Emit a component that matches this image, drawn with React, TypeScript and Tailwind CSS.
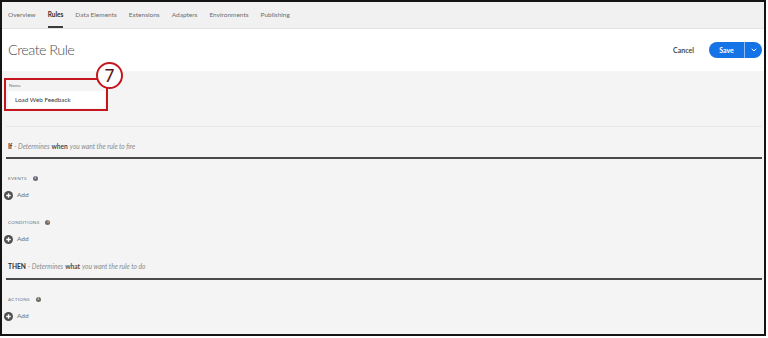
import { ChevronDown } from "lucide-react";

const TABS = ["Overview", "Rules", "Data Elements", "Extensions", "Adapters", "Environments", "Publishing"];

function InfoDot() {
  return (
    <span className="ml-[6px] flex h-[5px] w-[5px] items-center justify-center rounded-full bg-[#6b6b6b] text-[4px] font-bold leading-none text-white">
      i
    </span>
  );
}

function SectionLabel({ label, mt }: { label: string; mt: string }) {
  return (
    <div className={`flex h-[12px] items-center pl-[6px] ${mt}`}>
      <span className="text-[4.6px] uppercase tracking-[0.06em] text-[#6e6e6e]">{label}</span>
      <InfoDot />
    </div>
  );
}

function AddRow() {
  return (
    <div className="mt-[4px] flex h-[14px] items-center pl-[2px]">
      <svg width="9" height="9" viewBox="0 0 18 18">
        <circle cx="9" cy="9" r="9" fill="#505050" />
        <path d="M9 4.5v9M4.5 9h9" stroke="#fff" strokeWidth="2.6" />
      </svg>
      <span className="ml-[4px] text-[6.5px] text-[#6b6b6b]">Add</span>
    </div>
  );
}

function Heading({ lead, verb, rest, mt }: { lead: string; verb: string; rest: string; mt: string }) {
  return (
    <div className={`flex h-[14px] items-center pl-[6px] text-[6.6px] ${mt}`}>
      <span className="font-bold text-[#2c2c2c]">{lead}</span>
      <span className="ml-[2px] italic text-[#8a8a8a]">- Determines</span>
      <span className="ml-[2px] font-bold text-[#4b4b4b]">{verb}</span>
      <span className="ml-[2px] italic text-[#8a8a8a]">{rest}</span>
    </div>
  );
}

export default function App() {
  return (
    <div className="h-[338px] w-[768px] bg-white font-['Lato',sans-serif]">
      <div className="flex h-[336px] w-[766px] flex-col overflow-hidden border-2 border-[#141414] bg-[#f4f4f4]">
        {/* Tabs */}
        <div className="flex h-[27px] shrink-0 items-stretch gap-[12px] border-b border-[#e3e3e3] bg-[#f1f1f1] px-[6px]">
          {TABS.map((t) => (
            <div
              key={t}
              className={
                t === "Rules"
                  ? "flex items-center border-b-2 border-[#3c3c3c] pt-[2px] text-[6.5px] font-bold text-[#2c2c2c]"
                  : "flex items-center text-[6.5px] text-[#6e6e6e]"
              }
            >
              {t}
            </div>
          ))}
        </div>

        {/* Header */}
        <div className="flex h-[42px] shrink-0 items-center justify-between bg-white pl-[6px] pr-[2px]">
          <span className="text-[14.5px] font-light tracking-[-0.04em] text-[#505050]">Create Rule</span>
          <div className="flex items-center">
            <span className="mr-[15px] text-[7px] font-bold text-[#4b4b4b]">Cancel</span>
            <div className="flex h-[16px] w-[53px] items-center rounded-full bg-[#1473e6] text-white">
              <span className="flex h-full w-[36px] items-center justify-center border-r border-[#8dbbf2] text-[7px] font-bold">
                Save
              </span>
              <span className="flex flex-1 items-center justify-center">
                <ChevronDown size={8} strokeWidth={3} />
              </span>
            </div>
          </div>
        </div>

        {/* Body */}
        <div className="relative flex flex-1 flex-col">
          <div className="ml-[2px] mt-[7px] w-[104px] border-2 border-[#c5161d] pb-[1px] pl-[2px] pr-[1px]">
            <div className="flex h-[11px] items-end pb-[2px] pl-[1px] text-[4.6px] text-[#6e6e6e]">Name</div>
            <div className="flex h-[17px] items-center bg-white pl-[7px] text-[6.3px] text-[#3a3a3a]">
              Load Web Feedback
            </div>
          </div>
          <div className="absolute left-[94px] top-[-9px] flex h-[27px] w-[27px] items-center justify-center rounded-full border-2 border-[#c5161d] bg-white text-[17px] font-medium leading-none text-[#5e1518]">
            7
          </div>

          <div className="ml-[4px] mr-[2px] mt-[15px] h-px bg-[#e6e6e6]" />

          <Heading lead="If" verb="when" rest="you want the rule to fire" mt="mt-[13px]" />
          <div className="ml-[4px] mr-[2px] mt-[3px] h-[2px] bg-[#4a4a4a]" />

          <SectionLabel label="Events" mt="mt-[13px]" />
          <AddRow />
          <SectionLabel label="Conditions" mt="mt-[14px]" />
          <AddRow />

          <Heading lead="THEN" verb="what" rest="you want the rule to do" mt="mt-[14px]" />
          <div className="ml-[4px] mr-[2px] mt-[4px] h-[2px] bg-[#4a4a4a]" />

          <SectionLabel label="Actions" mt="mt-[13px]" />
          <AddRow />
        </div>
      </div>
    </div>
  );
}
